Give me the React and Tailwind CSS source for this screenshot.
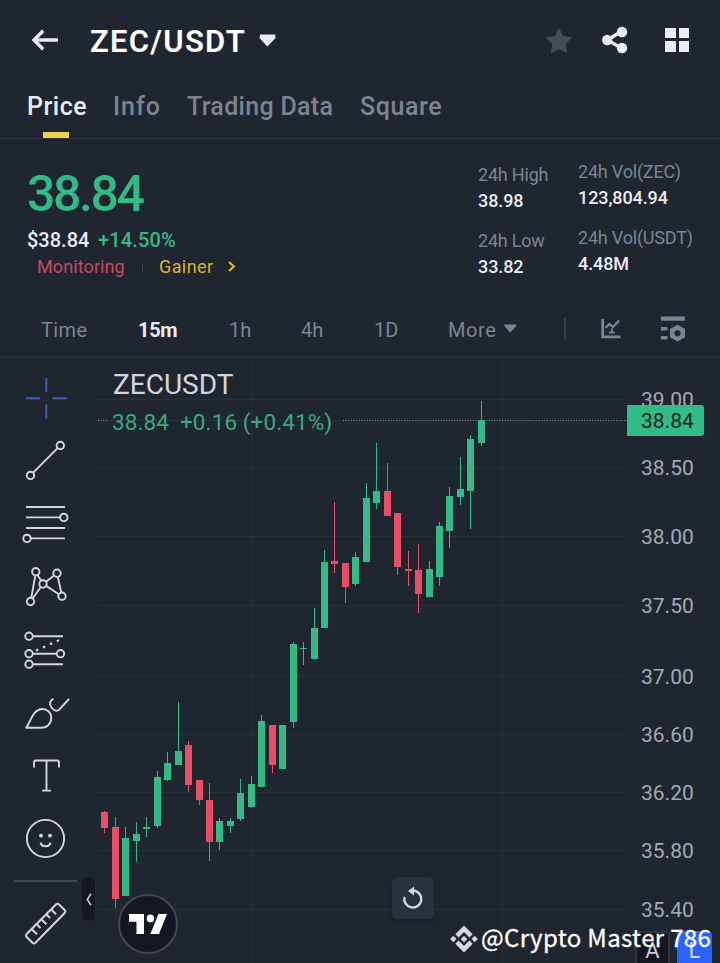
import React from "react";

const GREEN = "#34ba87";
const RED = "#ea4d66";

// [left edge, high, body top, body bottom, low, rising]
const CANDLES = [
  [101, 811, 812, 828, 833, 0],
  [112, 817, 827, 899, 908, 0],
  [122, 827, 838, 896, 896, 1],
  [133, 822, 834, 841, 862, 1],
  [143, 817, 827, 829, 837, 1],
  [154, 771, 777, 826, 828, 1],
  [164, 752, 763, 780, 781, 1],
  [175, 702, 751, 765, 765, 1],
  [185, 741, 745, 785, 792, 0],
  [196, 780, 780, 800, 805, 0],
  [206, 783, 800, 842, 861, 0],
  [216, 818, 821, 842, 850, 1],
  [227, 818, 821, 826, 833, 1],
  [237, 779, 793, 819, 821, 1],
  [248, 776, 784, 807, 808, 1],
  [258, 715, 721, 787, 787, 1],
  [269, 725, 725, 765, 773, 0],
  [279, 725, 725, 769, 769, 1],
  [290, 642, 644, 722, 728, 1],
  [300, 642, 648, 649, 665, 1],
  [311, 608, 628, 659, 659, 1],
  [321, 550, 562, 628, 628, 1],
  [331, 502, 561, 564, 573, 0],
  [342, 563, 563, 587, 603, 0],
  [352, 552, 557, 584, 586, 1],
  [363, 483, 498, 562, 562, 1],
  [373, 443, 491, 503, 509, 1],
  [384, 463, 491, 516, 516, 0],
  [394, 513, 513, 567, 575, 0],
  [405, 551, 569, 571, 586, 0],
  [415, 544, 570, 594, 613, 0],
  [426, 561, 569, 597, 597, 1],
  [436, 522, 526, 577, 586, 1],
  [446, 487, 496, 531, 548, 1],
  [457, 457, 489, 497, 505, 1],
  [467, 435, 439, 491, 529, 1],
  [478, 401, 420, 443, 446, 1],
];

const LEVELS = [
  ["39.00", 399],
  ["38.50", 467],
  ["38.00", 536],
  ["37.50", 605],
  ["37.00", 676],
  ["36.60", 734],
  ["36.20", 792],
  ["35.80", 850],
  ["35.40", 909],
];

function Header() {
  return (
    <header className="flex h-[82px] items-center pl-[31px] text-[#eaecf3]">
      <svg width="28" height="22" viewBox="0 0 28 22" className="-mt-[3px] shrink-0" fill="none" stroke="currentColor" strokeWidth="3.4">
        <path d="M27 11H3M12.2 1.8L3 11l9.2 9.2" />
      </svg>
      <h1 className="mt-[2px] ml-[31px] w-[169px] text-[31px] font-semibold tracking-[1.25px] whitespace-nowrap text-white">ZEC/USDT</h1>
      <svg width="17" height="13" viewBox="0 0 17 13" className="-mt-[2px] shrink-0" fill="currentColor">
        <path d="M1 0.5h15.200l.3 3.600L8.800 12.300h-.8L0.500 4.100z" />
      </svg>
      <svg width="28" height="28" viewBox="0 0 28 28" className="ml-[269px] shrink-0" fill="#474d57">
        <path d="M14 0.8l4.1 8.3 9.1 1.4-6.6 6.5 1.5 9.3L14 22l-8.1 4.3 1.5-9.3L0.8 10.5l9.1-1.4z" />
      </svg>
      <svg width="28" height="28" viewBox="0 0 28 28" className="-mt-[3px] ml-[28px] shrink-0" fill="currentColor">
        <path d="M21 5L6.500 14l14.500 8.500" fill="none" stroke="currentColor" strokeWidth="3.4" />
        <circle cx="21" cy="6" r="5.200" />
        <circle cx="6.200" cy="14" r="5.200" />
        <circle cx="21" cy="22" r="5.200" />
      </svg>
      <div className="-mt-[3px] ml-[36px] grid shrink-0 grid-cols-2 gap-[3px]">
        <span className="size-[10.5px] bg-[#eaecf3]" />
        <span className="size-[10.5px] bg-[#eaecf3]" />
        <span className="size-[10.5px] bg-[#eaecf3]" />
        <span className="size-[10.5px] bg-[#eaecf3]" />
      </div>
    </header>
  );
}

function Tabs() {
  return (
    <nav className="flex h-[57px] border-b border-[#2f363f] pl-[27px] text-[25px] leading-[50px] font-medium whitespace-nowrap text-[#7c8491]">
      <div className="flex w-[86px] flex-col text-[#eaecf3]">
        <span className="tracking-[0.5px]">Price</span>
        <span className="ml-[16px] h-[6px] w-[26px] bg-[#f0d04d]" />
      </div>
      <span className="w-[74px] tracking-[1px]">Info</span>
      <span className="w-[173px] tracking-[0.3px]">Trading Data</span>
      <span className="tracking-[0.6px]">Square</span>
    </nav>
  );
}

function Stat({ label, value }) {
  return (
    <div className="text-[18px] leading-[26px] whitespace-nowrap">
      <div className="tracking-[-0.2px] text-[#7c8491]">{label}</div>
      <div className="font-medium tracking-[-0.1px] text-[#eaecf3]">{value}</div>
    </div>
  );
}

function Summary() {
  return (
    <section className="flex h-[162px] pl-[27px] whitespace-nowrap">
      <div className="w-[451px] pt-[28px]">
        <div className="text-[50px] leading-[54px] font-medium tracking-[-2.4px] text-[#34ba87]">38.84</div>
        <div className="mt-[5px] flex text-[20px] leading-[28px] font-medium">
          <span className="w-[71px]  text-[#eaecf3]">$38.84</span>
          <span className="tracking-[0.15px] text-[#34ba87]">+14.50%</span>
        </div>
        <div className="mt-[2px] flex items-center pl-[10px] text-[18px] leading-[22px]">
          <span className="w-[105px] tracking-[0.1px] text-[#c94a64]">Monitoring</span>
          <span className="h-[7px] w-px bg-[#3f4650]" />
          <span className="ml-[16px] w-[69px] tracking-[0.4px] text-[#dcb23a]">Gainer</span>
          <svg width="8" height="11" viewBox="0 0 8 11" className="-mt-px" fill="none" stroke="#e8b430" strokeWidth="2.200">
            <path d="M1 1l4.800 4.500L1 10" />
          </svg>
        </div>
      </div>
      <div className="flex w-[100px] flex-col gap-[14px] pt-[23px]">
        <Stat label="24h High" value="38.98" />
        <Stat label="24h Low" value="33.82" />
      </div>
      <div className="flex flex-col gap-[14px] pt-[20px]">
        <Stat label="24h Vol(ZEC)" value="123,804.94" />
        <Stat label="24h Vol(USDT)" value="4.48M" />
      </div>
    </section>
  );
}

function Intervals() {
  return (
    <div className="flex h-[57px] items-center border-b-2 border-[#262d37] pt-[2px] pl-[41px] text-[20px] whitespace-nowrap text-[#7c8491]">
      <span className="w-[97px] tracking-[0.4px]">Time</span>
      <span className="w-[91px] font-bold tracking-[-0.3px] text-[#eaecf3]">15m</span>
      <span className="w-[72px]">1h</span>
      <span className="w-[73px]">4h</span>
      <span className="w-[74px]">1D</span>
      <span className="w-[56px] tracking-[0.6px]">More</span>
      <svg width="13" height="9" viewBox="0 0 13 9" className="-mt-[3px]" fill="currentColor">
        <path d="M0.300 0.500h12v1.500L6.300 8.500 0.300 2z" />
      </svg>
      <span className="-mt-[2px] ml-[47px] h-[21px] w-[2px] bg-[#363d47]" />
      <svg width="20" height="20" viewBox="0 0 20 20" className="-mt-[2px] ml-[35px]" fill="none" stroke="currentColor" strokeWidth="2.800">
        <path d="M1.700 0v17.800H19.500" />
        <path d="M4.500 9l4-4 3.500 3 6.200-6.500" strokeWidth="2.300" />
        <path d="M10.800 9.500v4M7.800 13.500h6" strokeWidth="1.800" />
      </svg>
      <svg width="26" height="27" viewBox="0 0 26 27" className="-mt-[2px] ml-[39px]" fill="currentColor">
        <path d="M1 1.500h24v4.300H1zM1 12h6.500v3.600H1zM1 21h6.500v3.600H1z" />
        <path fillRule="evenodd" d="M17.500 9.700l7.500 4.300v8.200l-7.500 4.400-7.500-4.400V14zM17.500 15a3.200 3.200 0 1 0 .01 0z" />
      </svg>
    </div>
  );
}

function Tool({ top, children }) {
  return (
    <svg width="98" height="63" viewBox={`0 ${top} 98 63`} className="block shrink-0" fill="none" stroke="#d3d6df" strokeWidth="1.900">
      {children}
    </svg>
  );
}

function Toolbar() {
  return (
    <aside className="flex w-[98px] shrink-0 flex-col pt-[10px]">
      <Tool top={367}>
        <path stroke="#3c5fbd" d="M46.300 378v14M46.300 404.500v14M26 398.300h14M52.500 398.300h14.500" />
      </Tool>
      <Tool top={430}>
        <circle cx="60.300" cy="445.500" r="3.700" />
        <circle cx="30.500" cy="475.400" r="3.700" />
        <path d="M57.600 448.200L33.200 472.700" />
      </Tool>
      <Tool top={493}>
        <path d="M26 507h39M26 517.400h34M26 528h39M31 538.400h34" />
        <circle cx="63.800" cy="517.400" r="3.700" />
        <circle cx="27" cy="538.400" r="3.700" />
      </Tool>
      <Tool top={556}>
        <circle cx="35.800" cy="571.700" r="3.700" />
        <circle cx="57" cy="573.200" r="3.700" />
        <circle cx="43" cy="584" r="3.700" />
        <circle cx="30.500" cy="601.500" r="3.700" />
        <circle cx="62" cy="596.200" r="3.700" />
        <path d="M35.300 575.400L31.300 597.800M37.400 575L41.400 580.700M46 581.700L54 575.500M40.800 587L32.700 598.500M46.200 585.900L58.800 594.300M57.800 576.800L61.300 592.500" />
      </Tool>
      <Tool top={619}>
        <path d="M32.500 636.200h30.500M32.500 653.700h24M32.500 664.200h30.500" />
        <circle cx="29" cy="636.200" r="3.700" />
        <circle cx="29" cy="653.700" r="3.700" />
        <circle cx="60.500" cy="653.700" r="3.700" />
        <circle cx="29" cy="664.200" r="3.700" />
        <path d="M36 650.500L62 639" strokeDasharray="2.400 5.200" strokeWidth="2.200" />
      </Tool>
      <Tool top={682}>
        <path strokeLinejoin="round" d="M26.200 727.800C31 721 33 709.500 42 709c5.500-.2 9.300 4 9.300 8.800 0 5.600-4 9.900-10 10z" />
        <path d="M53.500 698.800c-4 1.500-4.300 6-2 8.700l1.500 1.700c2 2 4.700 2 6.500.2L69 699" />
      </Tool>
      <Tool top={745}>
        <path d="M34 767.500v-5c0-1.200.8-2 2-2h21c1.200 0 2 .8 2 2v5M46.500 760.500v30M42 790.600h9" />
      </Tool>
      <Tool top={808}>
        <circle cx="45.500" cy="838.500" r="18.600" />
        <circle cx="41" cy="835.700" r="1.900" fill="#d3d6df" stroke="none" />
        <circle cx="50" cy="835.700" r="1.900" fill="#d3d6df" stroke="none" />
        <path d="M40.500 842.500c1 5 9 5 10 0" />
      </Tool>
      <div className="mt-[9px] ml-[14px] h-[2px] w-[63px] bg-[#424852]" />
      <svg width="98" height="70" viewBox="0 882 98 70" className="block shrink-0" fill="none" stroke="#d3d6df" strokeWidth="2">
        <path strokeLinejoin="round" d="M56.200 904.200q1.300-1 2.500 0l6.200 6q1 1.300 0 2.500L35.200 943q-1.300 1-2.500 0l-6.300-6.200q-1-1.300 0-2.500z" />
        <path d="M32 929.500l5 4.800M37 924.500l3.500 3.500M41.500 919.500l5 4.800M46.500 914.500l3.500 3.500M51.500 909.800l4.500 4.500" />
      </svg>
    </aside>
  );
}

function Chart() {
  return (
    <main className="relative h-full w-[529px] shrink-0">
      <svg width="529" height="606" viewBox="98 357 529 606" className="block" shapeRendering="crispEdges">
        {LEVELS.map(([label, y]) => (
          <rect key={label} x="98" y={y} width="529" height="1" fill="#29303a" />
        ))}
        <rect x="251" y="357" width="1" height="606" fill="#29303a" />
        <rect x="502" y="357" width="1" height="606" fill="#29303a" />
        <path d="M98 420.500h10M343 420.500h284" stroke="#6fae9c" strokeDasharray="1 1.650" shapeRendering="auto" />
        <path d="M108 420.500h235" stroke="#344b4b" strokeDasharray="1 1.650" shapeRendering="auto" />
        {CANDLES.map(([x, high, top, bottom, low, up]) => (
          <g key={x} fill={up ? GREEN : RED}>
            <rect x={x + 3} y={high} width="1" height={low - high} />
            <rect x={x} y={top} width="7" height={bottom - top} />
          </g>
        ))}
      </svg>

      <div className="absolute top-[11px] left-[15px] whitespace-nowrap">
        <div className="text-[28px] leading-[34px] text-[#d3d6df]">ZECUSDT</div>
        <div className="mt-[5px] -ml-px flex text-[22.5px] leading-[30px] text-[#3aa97e]">
          <span className="w-[68px] tracking-[0.1px]">38.84</span>
          <span className="tracking-[0.1px]">+0.16 (+0.41%)</span>
        </div>
      </div>

      <div className="absolute top-[520px] -left-[16px] flex h-[44px] w-[13px] items-center justify-center rounded-[5px] bg-[#131722] outline outline-[#252b36]">
        <svg width="6" height="13" viewBox="0 0 6 13" fill="none" stroke="#c8ccd6" strokeWidth="1.600">
          <path d="M5 0.800L1.300 6.500 5 12.200" />
        </svg>
      </div>

      <div className="absolute top-[537px] left-[20px] flex size-[60px] items-center justify-center rounded-full border-2 border-[#434651] bg-[#131722]">
        <svg width="38" height="20" viewBox="0 4 35.500 18" preserveAspectRatio="none" fill="#fff">
          <path d="M14 22H7V11H0V4h14v18zM28 22h-8l7.500-18h8L28 22z" />
          <circle cx="20" cy="8" r="3.500" />
        </svg>
      </div>

      <div className="absolute top-[520px] left-[294px] flex size-[42px] items-center justify-center rounded-[5px] bg-[#2a313c] shadow-md">
        <svg width="22" height="24" viewBox="0 0 22 24" fill="none" stroke="#d3d6df" strokeWidth="2.400">
          <path d="M2.500 11a8.500 8.500 0 1 0 8.500-6.500" />
          <path d="M6 5l6-4.500v9z" fill="#d3d6df" stroke="none" />
        </svg>
      </div>
    </main>
  );
}

function PriceAxis() {
  return (
    <aside className="relative h-full flex-1 text-[21px] leading-[24px] text-[#a5a9b4]">
      {LEVELS.map(([label, y]) => (
        <div key={label} className="absolute left-[14px]" style={{ top: y - 357 - 11 }}>
          {label}
        </div>
      ))}
      <div className="absolute top-[48px] left-0 h-[31px] w-[77px] rounded-r-[3px] bg-[#34ba87] pl-[14px] leading-[32px] text-[#12251f]">38.84</div>
      <div className="absolute top-[574px] left-[8px] h-[40px] w-[35px] rounded-[4px] border-2 border-[#2d343f] bg-[#131722] pt-[6px] text-center text-[22px] text-[#c8ccd6]">A</div>
      <div className="absolute top-[574px] left-[50px] h-[40px] w-[35px] rounded-[4px] bg-[#2962ff] pt-[8px] text-center text-[22px] text-[#d8dcea]">L</div>
    </aside>
  );
}

function Watermark() {
  return (
    <div className="absolute top-[921px] left-[450px] flex h-[36px] items-center whitespace-nowrap text-white">
      <svg width="28" height="28" viewBox="0 0 28 28" fill="#d9d9d9">
        <path d="M14 0.500l8.700 8.700-3.300 3.300L14 7.100l-5.400 5.400-3.300-3.300zM14 27.500l8.700-8.700-3.300-3.300-5.400 5.400-5.400-5.400-3.300 3.300zM14 10.800l3.200 3.200-3.200 3.200-3.200-3.200zM3.300 10.800L6.500 14l-3.200 3.200L0.100 14zM24.700 10.800l3.200 3.200-3.200 3.200-3.200-3.200z" />
      </svg>
      <span className="-mt-[4px] ml-[3px] font-['Noto_Sans_CJK_SC',sans-serif] text-[24px] leading-[36px] tracking-[0.35px] [-webkit-text-stroke:0.3px_white]">
        @Crypto Master 786
      </span>
    </div>
  );
}

export default function App() {
  return (
    <div className="relative flex h-[963px] w-[720px] flex-col overflow-hidden bg-[#1f262f] font-[Roboto,sans-serif]">
      <Header />
      <Tabs />
      <Summary />
      <Intervals />
      <div className="-mt-px flex h-[606px] shrink-0">
        <Toolbar />
        <Chart />
        <PriceAxis />
      </div>
      <Watermark />
    </div>
  );
}
